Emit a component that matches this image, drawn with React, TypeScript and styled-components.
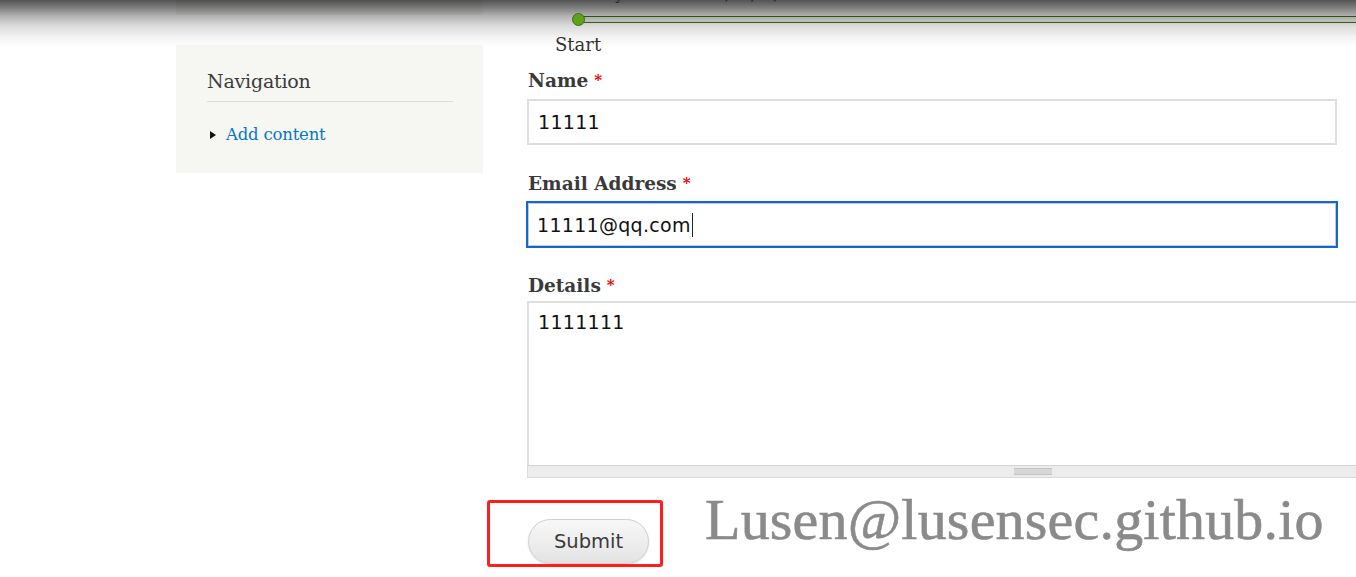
import React from "react";
import styled, { createGlobalStyle } from "styled-components";

const Global = createGlobalStyle`
  html, body { margin: 0; padding: 0; background: #fff; }
  body { overflow: hidden; font-family: "DejaVu Serif", Georgia, serif; }
`;

const Page = styled.div`
  position: relative;
  width: 1356px;
  height: 577px;
  overflow: hidden;
  display: flex;
  align-items: flex-start;
  background: #fff;
`;

const TopShade = styled.div`
  position: absolute;
  left: 0;
  top: 0;
  right: 0;
  height: 48px;
  pointer-events: none;
  background: linear-gradient(
    to bottom,
    rgba(0, 0, 0, 0.68) 0px,
    rgba(0, 0, 0, 0.5) 8px,
    rgba(0, 0, 0, 0.3) 16px,
    rgba(0, 0, 0, 0.14) 26px,
    rgba(0, 0, 0, 0.04) 38px,
    rgba(0, 0, 0, 0) 48px
  );
`;

const Sidebar = styled.aside`
  margin-left: 176px;
  width: 307px;
  flex: none;
  display: flex;
  flex-direction: column;
  gap: 30px;
`;

const Block = styled.section<{ $h?: number }>`
  background: #f6f6f2;
  ${(p) => (p.$h ? `height: ${p.$h}px;` : "")}
`;

const NavBlock = styled(Block)`
  padding: 22px 30px 26px 31px;
`;

const BlockTitle = styled.h2`
  margin: 0 0 6px;
  font-family: "DejaVu Serif", Georgia, serif;
  font-weight: normal;
  font-size: 19px;
  line-height: 28px;
  color: #3b3b3b;
  letter-spacing: -0.2px;
`;

const Rule = styled.hr`
  margin: 0;
  border: 0;
  border-top: 1px solid #dcdcd8;
`;

const NavList = styled.ul`
  list-style: none;
  margin: 21px 0 0;
  padding: 0 0 0 3px;
`;

const NavItem = styled.li`
  display: flex;
  align-items: center;
  gap: 10px;
  line-height: 24px;
`;

const Arrow = styled.span`
  width: 0;
  height: 0;
  border-top: 4.5px solid transparent;
  border-bottom: 4.5px solid transparent;
  border-left: 6px solid #111;
`;

const NavLink = styled.a`
  font-family: "DejaVu Serif", Georgia, serif;
  font-size: 16.5px;
  color: #0678be;
  text-decoration: none;
  letter-spacing: -0.2px;
`;

const Main = styled.main`
  margin-left: 45px;
  margin-top: -14px;
  flex: 1;
  min-width: 0;
  display: flex;
  flex-direction: column;
  align-items: flex-start;
`;

const Meta = styled.div`
  font-family: "DejaVu Serif", Georgia, serif;
  font-size: 14px;
  line-height: 18px;
  color: #555;
  white-space: nowrap;
`;

const Progress = styled.div`
  margin-top: 9px;
  width: 100%;
  height: 12px;
  display: flex;
  align-items: center;
  padding-left: 44px;
  box-sizing: border-box;
`;

const Dot = styled.span`
  flex: none;
  width: 11px;
  height: 11px;
  border-radius: 50%;
  background: #5fa11a;
  border: 1px solid #3d7010;
  position: relative;
  z-index: 1;
`;

const Track = styled.span`
  flex: 1;
  height: 5px;
  margin-left: -1px;
  background: #f2f2f2;
  border-top: 1px solid #3e7a10;
  border-bottom: 1px solid #3e7a10;
`;

const StepLabel = styled.div`
  margin: 9px 0 0 27px;
  font-family: "DejaVu Serif", Georgia, serif;
  font-size: 18px;
  line-height: 22px;
  color: #333;
`;

const FormItem = styled.div<{ $top: number }>`
  margin-top: ${(p) => p.$top}px;
  display: flex;
  flex-direction: column;
  align-items: flex-start;
`;

const Label = styled.label<{ $gap: number }>`
  display: block;
  height: 22px;
  margin-bottom: ${(p) => p.$gap}px;
  font-family: "DejaVu Serif", Georgia, serif;
  font-weight: bold;
  font-size: 18.5px;
  line-height: 22px;
  color: #3a3a3a;
  white-space: nowrap;
`;

const Req = styled.span`
  margin-left: 6px;
  color: #ee0000;
  font-size: 15px;
  position: relative;
  top: -2px;
`;

const TextBox = styled.div<{ $focused?: boolean; $h: number }>`
  box-sizing: border-box;
  width: ${(p) => (p.$focused ? 812 : 810)}px;
  height: ${(p) => p.$h}px;
  margin-left: ${(p) => (p.$focused ? -2 : -1)}px;
  display: flex;
  align-items: center;
  padding: 0 9px;
  font-family: "DejaVu Sans", Verdana, sans-serif;
  font-size: 19px;
  color: #111;
  letter-spacing: 0.3px;
  background: #fff;
  border: ${(p) => (p.$focused ? "2px solid #1466d8" : "2px solid #dedede")};
  box-shadow: ${(p) => (p.$focused ? "inset 0 0 0 1px #c8c8c8" : "none")};
`;

const Caret = styled.span`
  display: inline-block;
  width: 1px;
  height: 24px;
  margin-left: 1px;
  background: #222;
`;

const AreaWrap = styled.div`
  margin-left: -1px;
  width: 1012px;
  display: flex;
  flex-direction: column;
`;

const Area = styled.div`
  box-sizing: border-box;
  height: 164px;
  padding: 6px 9px;
  font-family: "DejaVu Sans", Verdana, sans-serif;
  font-size: 19px;
  line-height: 26px;
  color: #111;
  letter-spacing: 0.3px;
  background: #fff;
  border: 2px solid #dedede;
  border-bottom: 0;
`;

const Grippie = styled.div`
  box-sizing: border-box;
  height: 13px;
  background: #ececec;
  border: 1px solid #dcdcdc;
  border-top-color: #d4d4d4;
  display: flex;
  align-items: center;
  justify-content: center;
`;

const GripLines = styled.span`
  width: 38px;
  height: 5px;
  border-top: 1px solid #c4c4c4;
  border-bottom: 1px solid #c4c4c4;
  background: #d6d6d6;
`;

const Actions = styled.div`
  position: relative;
  margin-top: 41px;
`;

const Button = styled.button`
  box-sizing: border-box;
  width: 121px;
  height: 45px;
  border-radius: 23px;
  border: 1px solid #cfcfcf;
  background: linear-gradient(to bottom, #f7f7f7 0%, #ececec 60%, #e2e2e2 100%);
  box-shadow: 0 1px 2px rgba(0, 0, 0, 0.12);
  font-family: "DejaVu Sans", "Lucida Grande", sans-serif;
  font-size: 19.5px;
  color: #3a3a3a;
  padding: 0;
  cursor: pointer;
`;

const Highlight = styled.span`
  position: absolute;
  left: -41px;
  top: -19px;
  width: 176px;
  height: 67px;
  box-sizing: border-box;
  border: 3px solid #ff1d1d;
  border-radius: 3px;
  pointer-events: none;
`;

const Watermark = styled.div`
  position: absolute;
  left: 705px;
  top: 487px;
  font-family: "Liberation Serif", "Times New Roman", serif;
  font-size: 58px;
  line-height: 66px;
  color: #8a8a8a;
  white-space: nowrap;
  letter-spacing: 0.2px;
  -webkit-text-stroke: 0.6px #8a8a8a;
  pointer-events: none;
`;

export default function App() {
  return (
    <>
      <Global />
      <Page>
        <Sidebar>
          <Block $h={15} />
          <NavBlock>
            <BlockTitle>Navigation</BlockTitle>
            <Rule />
            <NavList>
              <NavItem>
                <Arrow />
                <NavLink href="#">Add content</NavLink>
              </NavItem>
            </NavList>
          </NavBlock>
        </Sidebar>
        <Main>
          <Meta>Submitted by admin on Tue, 03/08/2016 - 10:15</Meta>
          <Progress>
            <Dot />
            <Track />
          </Progress>
          <StepLabel>Start</StepLabel>
          <FormItem $top={14}>
            <Label $gap={7}>
              Name<Req>*</Req>
            </Label>
            <TextBox $h={46}>11111</TextBox>
          </FormItem>
          <FormItem $top={28}>
            <Label $gap={6}>
              Email Address<Req>*</Req>
            </Label>
            <TextBox $focused $h={47}>
              11111@qq.com
              <Caret />
            </TextBox>
          </FormItem>
          <FormItem $top={27}>
            <Label $gap={4}>
              Details<Req>*</Req>
            </Label>
            <AreaWrap>
              <Area>1111111</Area>
              <Grippie>
                <GripLines />
              </Grippie>
            </AreaWrap>
          </FormItem>
          <Actions>
            <Button type="button">Submit</Button>
            <Highlight />
          </Actions>
        </Main>
        <TopShade />
        <Watermark>Lusen@lusensec.github.io</Watermark>
      </Page>
    </>
  );
}
